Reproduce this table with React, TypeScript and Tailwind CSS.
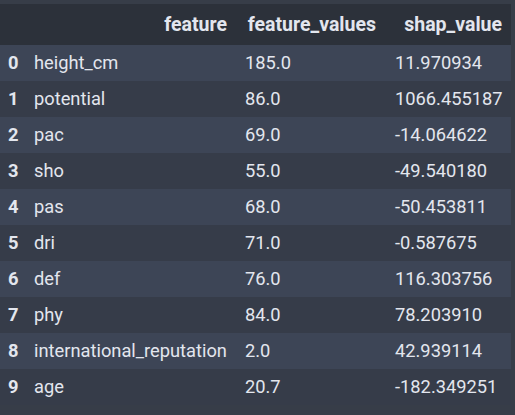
import React from 'react'

const rows: [string, string, string][] = [
  ['height_cm', '185.0', '11.970934'],
  ['potential', '86.0', '1066.455187'],
  ['pac', '69.0', '-14.064622'],
  ['sho', '55.0', '-49.540180'],
  ['pas', '68.0', '-50.453811'],
  ['dri', '71.0', '-0.587675'],
  ['def', '76.0', '116.303756'],
  ['phy', '84.0', '78.203910'],
  ['international_reputation', '2.0', '42.939114'],
  ['age', '20.7', '-182.349251'],
]

export default function App() {
  return (
    <div
      className="w-[515px] h-[415px] bg-[#373d48] pt-[4px] text-[18.3px] text-[#e3e6ee] overflow-hidden"
      style={{ fontFamily: 'Roboto, "Noto Sans", sans-serif' }}
    >
      <div className="w-[511px]">
        {/* Header */}
        <div className="grid grid-cols-[26px_210px_150px_125px] h-[41px] items-center bg-[#2c313a] font-bold text-[19.5px]">
          <div />
          <div className="text-right pr-[9px]">feature</div>
          <div className="text-right pr-[10px]">feature_values</div>
          <div className="text-right pr-[9px]">shap_value</div>
        </div>

        {rows.map(([name, val, shap], i) => (
          <div
            key={i}
            className={`grid grid-cols-[26px_210px_150px_125px] h-[36px] items-center ${
              i % 2 === 0 ? 'bg-[#3d4556]' : 'bg-[#363c49]'
            }`}
          >
            <div className="pl-[8px] font-bold">{i}</div>
            <div className="pl-[8px]">{name}</div>
            <div className="pl-[9px]">{val}</div>
            <div className="pl-[9px]">{shap}</div>
          </div>
        ))}
      </div>
    </div>
  )
}
